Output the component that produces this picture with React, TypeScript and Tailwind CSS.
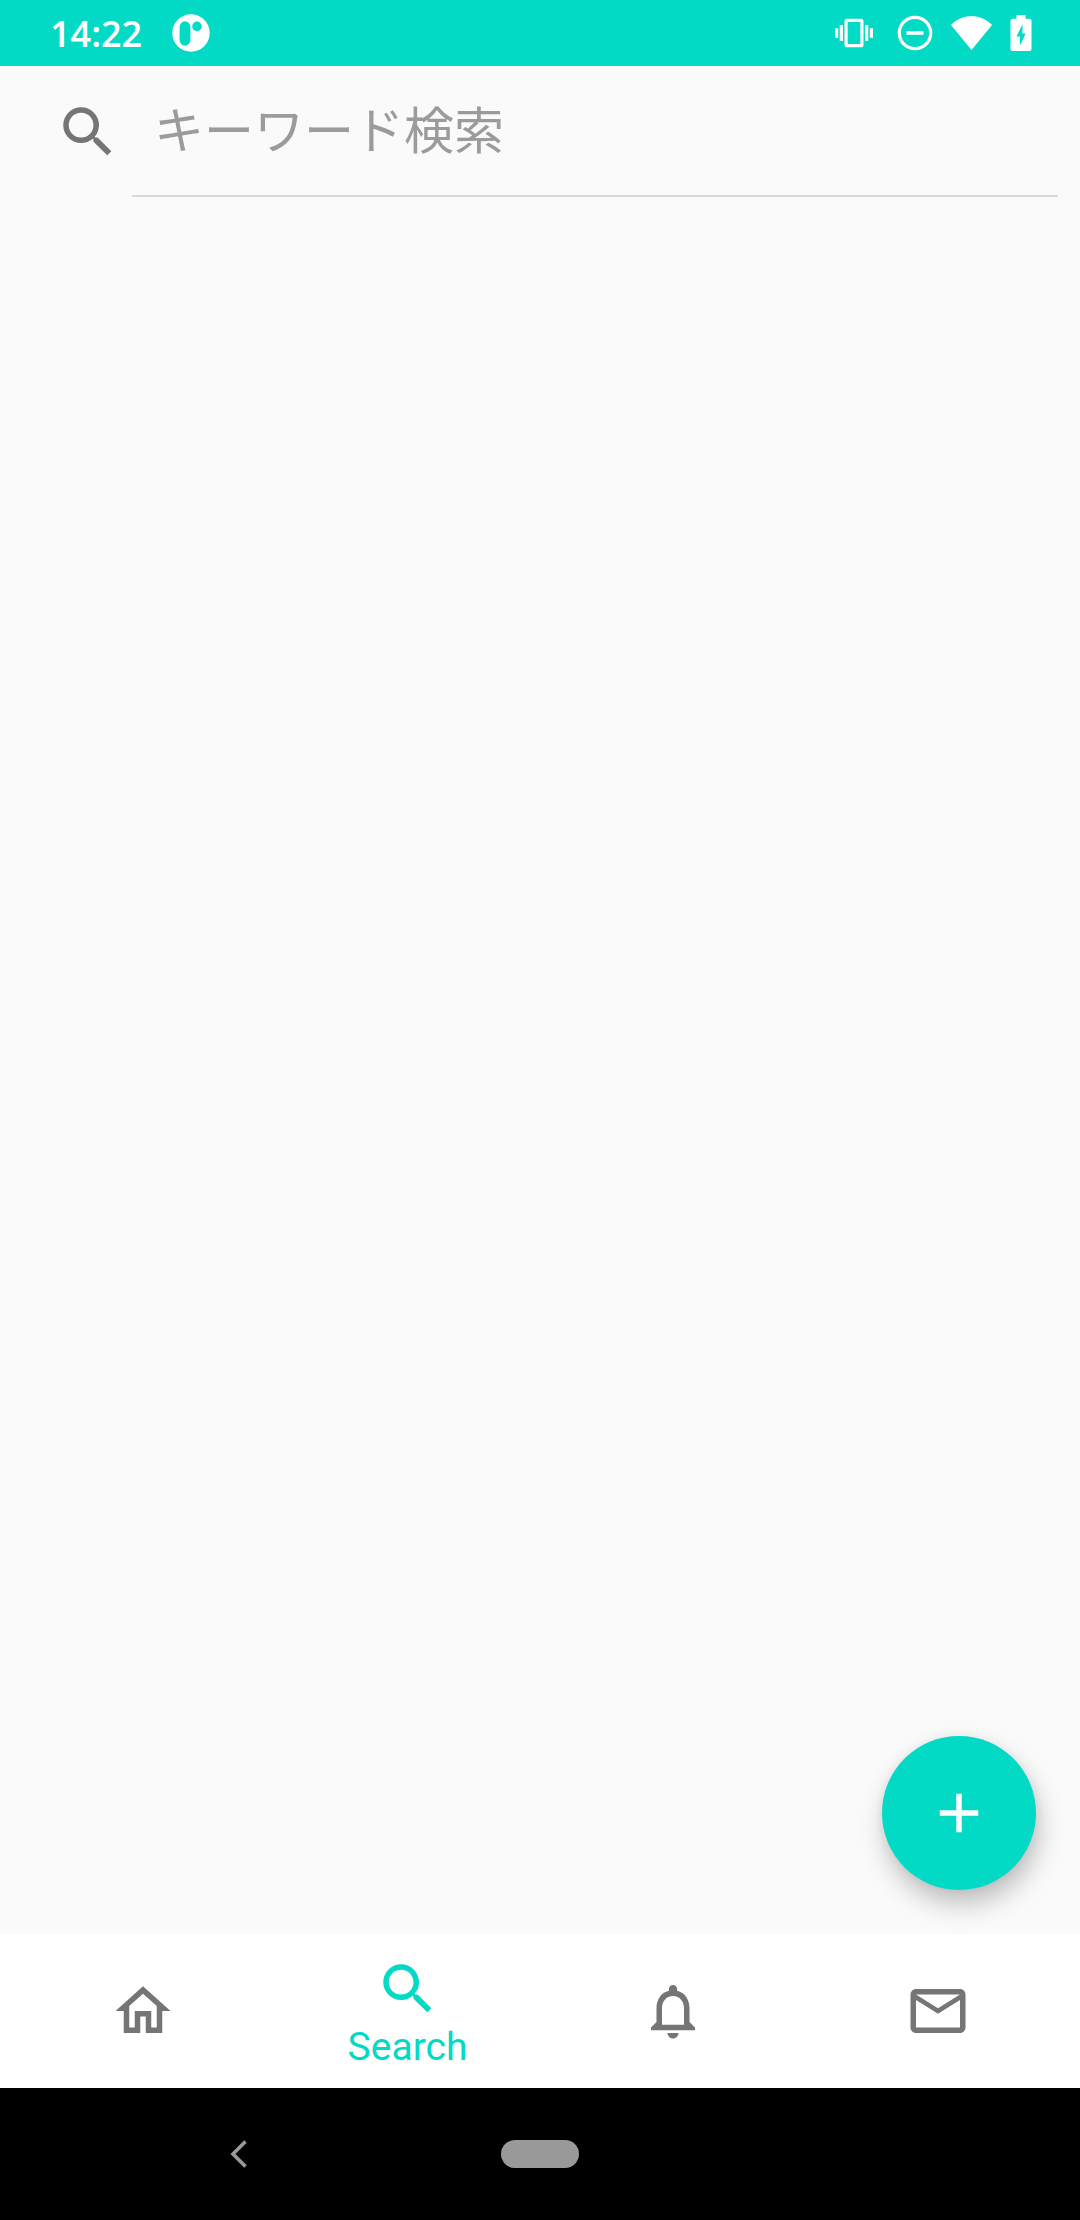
import { useState } from 'react'
import type { ReactNode } from 'react'
import { MdAdd, MdMailOutline, MdSearch, MdVibration } from 'react-icons/md'

const tabs: { id: string; label: string; icon: ReactNode }[] = [
  {
    id: 'home',
    label: 'Home',
    icon: (
      <svg viewBox="0 0 24 24" className="size-[66px]" fill="currentColor">
        <path d="M12 5.69l5 4.5V18h-2v-6H9v6H7v-7.81l5-4.5M12 3L2 12h3v8h6v-6h2v6h6v-8h3L12 3z" />
      </svg>
    ),
  },
  {
    id: 'search',
    label: 'Search',
    icon: <MdSearch className="size-[66px]" />,
  },
  {
    id: 'notifications',
    label: 'Notifications',
    icon: (
      <svg viewBox="0 0 24 24" className="size-[66px]" fill="currentColor">
        <path d="M12 22c1.1 0 2-.9 2-2h-4c0 1.1.89 2 2 2zm6-6v-5c0-3.07-1.64-5.64-4.5-6.32V4c0-.83-.67-1.5-1.5-1.5s-1.5.67-1.5 1.5v.68C7.63 5.36 6 7.92 6 11v5l-2 2v1h16v-1l-2-2zm-2 1H8v-6c0-2.48 1.51-4.5 4-4.5s4 2.02 4 4.5v6z" />
      </svg>
    ),
  },
  {
    id: 'messages',
    label: 'Messages',
    icon: <MdMailOutline className="size-[66px]" />,
  },
]

function StatusBar() {
  return (
    <header className="h-[66px] shrink-0 bg-[#03dac6] text-white flex items-center justify-between pl-[50px] pr-12">
      <div className="flex items-center gap-[30px]">
        <span className="pt-0.5 font-['Open_Sans',sans-serif] font-semibold text-[36px] leading-[48px]">
          14:22
        </span>
        {/* App notification */}
        <svg viewBox="0 0 38 38" className="size-[38px]">
          <circle cx="19" cy="19" r="18.7" fill="white" />
          <rect x="7.6" y="7.3" width="10.8" height="24.4" rx="5.4" fill="#03dac6" />
          <circle cx="25" cy="12.4" r="4.8" fill="#03dac6" />
        </svg>
      </div>

      <div className="flex items-center">
        <MdVibration className="size-[38px]" />
        {/* Do not disturb */}
        <svg viewBox="0 0 36 36" className="size-9 ml-6" fill="none" stroke="white">
          <circle cx="18" cy="18" r="15.7" strokeWidth="3.2" />
          <path d="M9.5 18h17" strokeWidth="3.6" />
        </svg>
        {/* Wifi */}
        <svg viewBox="0 0 41 34" className="w-[41px] h-[34px] ml-[18px]" fill="white">
          <path d="M20.5 34L0 9C5.5 3.5 12.5 0 20.5 0S35.5 3.5 41 9z" />
        </svg>
        {/* Battery, charging */}
        <svg viewBox="0 0 22 36" className="w-[22px] h-9 ml-[18px]">
          <path
            d="M6.5 0h9v3.8h4a2 2 0 0 1 2 2V34a2 2 0 0 1-2 2h-17a2 2 0 0 1-2-2V5.8a2 2 0 0 1 2-2h4z"
            fill="white"
          />
          <path d="M12.5 9.3L6.5 21.500h3.5v9l5.700-12H12.500z" fill="#03dac6" />
        </svg>
      </div>
    </header>
  )
}

function SearchBar() {
  const [keyword, setKeyword] = useState('')

  return (
    <form
      role="search"
      className="h-[131px] flex text-[#757575] pr-[22px]"
      onSubmit={(e) => e.preventDefault()}
    >
      <label htmlFor="keyword" className="w-[132px] shrink-0 pl-[55px] flex items-center">
        <MdSearch className="size-[66px]" aria-label="キーワード検索" />
      </label>
      <input
        id="keyword"
        type="text"
        value={keyword}
        onChange={(e) => setKeyword(e.target.value)}
        placeholder="キーワード検索"
        className="flex-1 min-w-0 pl-[22px] pb-1.5 border-b-2 border-[#d8d8d8] outline-none
                   font-['Noto_Sans_CJK_JP',sans-serif] text-[50px]
                   text-[#212121] placeholder:text-[#9b9b9b]"
      />
    </form>
  )
}

function BottomNav() {
  const [active, setActive] = useState('search')

  return (
    <nav className="h-[154px] shrink-0 bg-white flex px-2.5">
      {tabs.map((tab) => (
        <button
          key={tab.id}
          type="button"
          aria-label={tab.label}
          onClick={() => setActive(tab.id)}
          className={
            tab.id === active
              ? 'flex-1 flex flex-col items-center justify-center text-[#03dac6]'
              : 'flex-1 flex flex-col items-center justify-center text-[#757575]'
          }
        >
          {tab.icon}
          {tab.id === active && (
            <span className="mt-1.5 font-[Roboto,sans-serif] text-[39px] leading-[38px]">
              {tab.label}
            </span>
          )}
        </button>
      ))}
    </nav>
  )
}

function SystemNav() {
  return (
    <footer className="h-[132px] shrink-0 bg-black grid grid-cols-[1fr_78px_1fr] items-center">
      <button type="button" aria-label="Back" className="justify-self-center mr-6">
        <svg viewBox="0 0 18 30" className="w-[18px] h-[30px]" fill="none">
          <path d="M15.5 2.5L3 15l12.5 12.5" stroke="#999999" strokeWidth="3.6" />
        </svg>
      </button>
      <button type="button" aria-label="Home" className="h-7 rounded-full bg-[#999999]" />
    </footer>
  )
}

export default function App() {
  return (
    <div className="min-h-screen flex flex-col bg-[#fafafa]">
      <StatusBar />
      <main className="flex-1 relative">
        <SearchBar />
        <button
          type="button"
          aria-label="Compose"
          className="absolute right-11 bottom-11 size-[154px] rounded-full bg-[#03dac6] text-white
                     flex items-center justify-center
                     shadow-[3px_14px_26px_rgba(0,0,0,0.24),0_0_10px_rgba(0,0,0,0.06)]"
        >
          <MdAdd className="size-[66px]" />
        </button>
      </main>
      <BottomNav />
      <SystemNav />
    </div>
  )
}
